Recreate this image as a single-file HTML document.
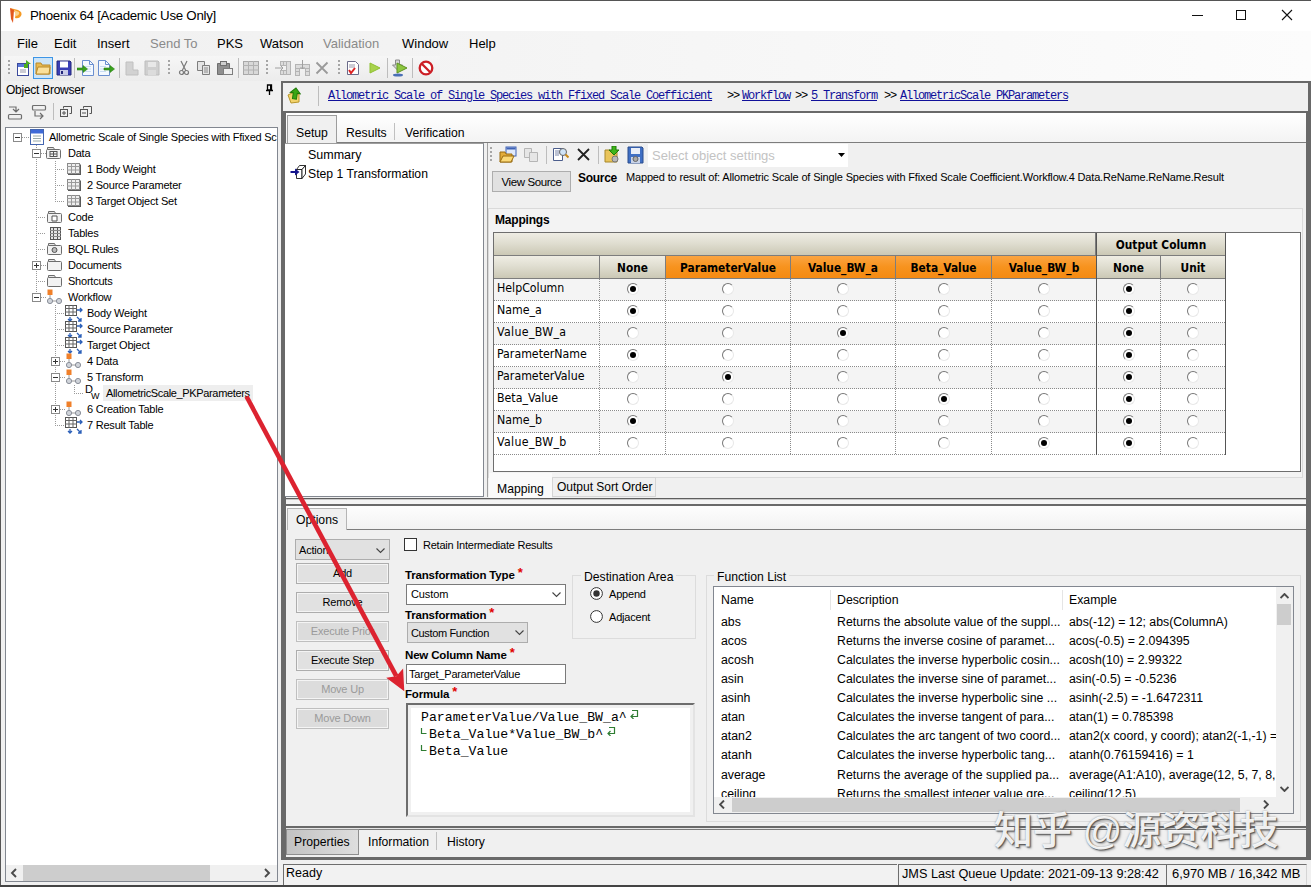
<!DOCTYPE html><html><head><meta charset="utf-8"><title>Phoenix 64 [Academic Use Only]</title><style>
*{box-sizing:border-box}
html,body{margin:0;padding:0}
body{width:1311px;height:887px;position:relative;overflow:hidden;background:#f0f0f0;font-family:"Liberation Sans",sans-serif;font-size:12px;color:#000}
.a{position:absolute}
.t{position:absolute;white-space:nowrap;line-height:1}
.ui{font-family:"Liberation Sans",sans-serif}
.tah{font-family:"DejaVu Sans Condensed","DejaVu Sans","Liberation Sans",sans-serif}
.mono{font-family:"Liberation Mono",monospace}
.gray{color:#8a8a8a}
.b{font-weight:bold}
.btn{position:absolute;border:1px solid #adadad;background:#e1e1e1;text-align:center;font-size:12px;white-space:nowrap}
.btn.dis{color:#9a9a9a;border-color:#bfbfbf;background:#dcdcdc}
.hdr{position:absolute;background:linear-gradient(#efede4,#e0ded1 45%,#cbc8b5);border-right:1px solid #7d7d7d;border-bottom:1px solid #7d7d7d;text-align:center;font-weight:bold;font-size:12px}
.org{background:linear-gradient(#fba441,#f7931e 50%,#f58a12)}
.radio{position:absolute;width:12px;height:12px;border-radius:50%;background:#fff;border:1.500px solid #777;border-right-color:#e8e8e8;border-bottom-color:#e8e8e8;transform:rotate(0deg)}
.radio.on::after{content:"";position:absolute;left:2px;top:2px;width:6px;height:6px;border-radius:50%;background:#000}
.bc{position:absolute;white-space:nowrap;line-height:1;font-family:"Liberation Mono",monospace;font-size:12px;letter-spacing:-1.2px;color:#10109a;text-decoration:underline}
</style></head><body>
<div class="a" style="left:0px;top:0px;width:1311px;height:31px;background:#fff"></div>
<svg class="a" style="left:8px;top:7px" width="16" height="17" viewBox="0 0 16 17"><path d="M2 1 L10 3 Q15 5 13 9 Q11 12 7 11 L8 6 Z" fill="#f59a23"/><path d="M2 1 L6 3 L5 16 L3 12 Z" fill="#e2571c"/><path d="M6 3 L11 5 Q12 8 8 9 Z" fill="#fbd08a"/></svg>
<span id="title" class="t ui" style="left:30px;top:9px;font-size:13.3px;letter-spacing:-0.28px;">Phoenix 64 [Academic Use Only]</span>
<svg class="a" style="left:1180px;top:0" width="131" height="31" viewBox="0 0 131 31"><g stroke="#111" stroke-width="1" fill="none" shape-rendering="crispEdges"><path d="M11.500 15.500H22.500"/><rect x="56.500" y="10.500" width="9" height="9"/></g><path d="M102 10 L112 20 M112 10 L102 20" stroke="#111" stroke-width="1.100" fill="none"/></svg>
<div class="a" style="left:0px;top:31px;width:1311px;height:50px;background:linear-gradient(90deg,#f0f0f0,#f3f3f3 30%,#fcfcfc)"></div>
<div class="a" style="left:4px;top:56px;width:436px;height:25px;background:linear-gradient(#f6f6f6,#ececec)"></div>
<span id="m0" class="t ui" style="left:17px;top:37px;font-size:13px;">File</span>
<span id="m1" class="t ui" style="left:54px;top:37px;font-size:13px;">Edit</span>
<span id="m2" class="t ui" style="left:97px;top:37px;font-size:13px;">Insert</span>
<span id="m3" class="t ui gray" style="left:150px;top:37px;font-size:13px;">Send To</span>
<span id="m4" class="t ui" style="left:217px;top:37px;font-size:13px;">PKS</span>
<span id="m5" class="t ui" style="left:260px;top:37px;font-size:13px;">Watson</span>
<span id="m6" class="t ui gray" style="left:323px;top:37px;font-size:13px;">Validation</span>
<span id="m7" class="t ui" style="left:402px;top:37px;font-size:13px;">Window</span>
<span id="m8" class="t ui" style="left:469px;top:37px;font-size:13px;">Help</span>
<div class="a" style="left:8px;top:60px;width:2px;height:16px;background:repeating-linear-gradient(#a6a6a6 0 2px,transparent 2px 4px)"></div>
<svg class="a" style="left:16px;top:60px" width="16" height="16" viewBox="0 0 16 16" ><rect x="1.500" y="3.500" width="11" height="12" fill="#fff" stroke="#3b4a9c"/><rect x="2" y="4" width="10" height="3" fill="#5a78d8"/><path d="M4 10h6M4 12h6" stroke="#99a"/><path d="M9 1l5 4h-3v4h-4V5H9z" fill="#4caf1f" transform="translate(1,-1)"/></svg>
<div class="a" style="left:33px;top:57px;width:20px;height:22px;background:#cce4f7;border:1px solid #3d95e6"></div>
<svg class="a" style="left:35px;top:60px" width="16" height="16" viewBox="0 0 16 16" ><path d="M1 3h5l1 2h8v9H1z" fill="#e8b950" stroke="#b98a2a"/><path d="M1 14l2-7h12l-1 7z" fill="#fbe09a" stroke="#b98a2a"/></svg>
<svg class="a" style="left:56px;top:60px" width="16" height="16" viewBox="0 0 16 16" ><path d="M1 1h13l1 1v13H1z" fill="#3a3fb5" stroke="#23267a"/><rect x="4" y="1.500" width="8" height="6" fill="#fff"/><rect x="4" y="10" width="8" height="5" fill="#c9cbe8"/><rect x="5" y="11" width="2" height="3" fill="#23267a"/></svg>
<div class="a" style="left:74px;top:58px;width:1px;height:20px;background:#bdbdbd"></div>
<svg class="a" style="left:77px;top:60px" width="18" height="16" viewBox="0 0 18 16" ><path d="M5.500 0.500h7l4 4v11h-11z" fill="#f4f9ff" stroke="#6a8fd0"/><path d="M12.500 0.500v4h4" fill="none" stroke="#6a8fd0"/><path d="M8 6.500h6M8 9h6M8 11.500h6" stroke="#c9dcf2"/><path d="M0 8h6V5.500l4.500 3.500L6 12.500V10H0z" fill="#3aa21f" stroke="#2a8212" stroke-width="0.600"/></svg>
<svg class="a" style="left:97px;top:60px" width="18" height="16" viewBox="0 0 18 16" ><path d="M1.500 0.500h7l4 4v11h-11z" fill="#f4f9ff" stroke="#6a8fd0"/><path d="M8.500 0.500v4h4" fill="none" stroke="#6a8fd0"/><path d="M3 6.500h6M3 9h6M3 11.500h6" stroke="#c9dcf2"/><path d="M7 8h6V5.500l4.500 3.500L13 12.500V10H7z" fill="#3aa21f" stroke="#2a8212" stroke-width="0.600"/></svg>
<div class="a" style="left:119px;top:58px;width:1px;height:20px;background:#bdbdbd"></div>
<svg class="a" style="left:124px;top:60px" width="16" height="16" viewBox="0 0 16 16" ><path d="M2 2h7v8h5v5H2z" fill="#d2d2d2" stroke="#c0c0c0"/></svg>
<svg class="a" style="left:144px;top:60px" width="16" height="16" viewBox="0 0 16 16" ><path d="M1 1h13l1 1v13H1z" fill="#cfcfcf" stroke="#bdbdbd"/><rect x="4" y="2" width="8" height="5" fill="#e8e8e8"/><rect x="4" y="10" width="8" height="5" fill="#dcdcdc"/></svg>
<div class="a" style="left:168px;top:60px;width:2px;height:16px;background:repeating-linear-gradient(#a6a6a6 0 2px,transparent 2px 4px)"></div>
<svg class="a" style="left:178px;top:60px" width="12" height="16" viewBox="0 0 12 16" ><g stroke="#7a7a7a" fill="none" stroke-width="1.200"><path d="M3 1l5 10M9 1L4 11"/><circle cx="3.500" cy="12.500" r="2"/><circle cx="8.500" cy="12.500" r="2"/></g></svg>
<svg class="a" style="left:196px;top:60px" width="16" height="16" viewBox="0 0 16 16" ><g fill="#e4e4e4" stroke="#7d7d7d"><path d="M1.500 1.500h7v9h-7z"/><path d="M6.500 5.500h7v9h-7z"/></g><path d="M8 8h4M8 10h4M8 12h4" stroke="#8a8a8a"/></svg>
<svg class="a" style="left:216px;top:60px" width="18" height="16" viewBox="0 0 18 16" ><path d="M1.500 3.500h12v11h-12z" fill="#8f8f8f" stroke="#6f6f6f"/><rect x="4.500" y="1.500" width="6" height="4" fill="#cfcfcf" stroke="#6f6f6f"/><rect x="7.500" y="8.500" width="9" height="6" fill="#efefef" stroke="#7d7d7d"/></svg>
<div class="a" style="left:238px;top:58px;width:1px;height:20px;background:#bdbdbd"></div>
<svg class="a" style="left:243px;top:61px" width="16" height="14" viewBox="0 0 16 14" ><rect x="0.500" y="0.500" width="15" height="13" fill="#d9d9d9" stroke="#a8a8a8"/><path d="M0 4.500h16M0 9h16M5.500 0v14M10.500 0v14" stroke="#b2b2b2"/></svg>
<div class="a" style="left:266px;top:60px;width:2px;height:16px;background:repeating-linear-gradient(#a6a6a6 0 2px,transparent 2px 4px)"></div>
<svg class="a" style="left:275px;top:61px" width="16" height="14" viewBox="0 0 16 14" ><g fill="#dcdcdc" stroke="#b4b4b4"><rect x="5.500" y="0.500" width="10" height="4"/><rect x="5.500" y="9.500" width="10" height="4"/><rect x="11.500" y="0.500" width="4" height="13"/></g><path d="M8.500 0v4M8.500 10v4" stroke="#b4b4b4"/><path d="M0 7h8M6 5l2 2-2 2" stroke="#a0a0a0" fill="none"/></svg>
<svg class="a" style="left:295px;top:60px" width="16" height="16" viewBox="0 0 16 16" ><g fill="#dcdcdc" stroke="#b4b4b4"><rect x="0.500" y="4.500" width="4" height="11"/><rect x="10.500" y="4.500" width="4" height="11"/><rect x="0.500" y="4.500" width="14" height="4"/></g><path d="M0 11.500h4M11 11.500h4" stroke="#b4b4b4"/><path d="M7.500 0v9M5.500 7l2 2 2-2" stroke="#a0a0a0" fill="none"/></svg>
<svg class="a" style="left:315px;top:61px" width="14" height="14" viewBox="0 0 14 14" ><path d="M1.500 1.500l11 11M12.500 1.500l-11 11" stroke="#9a9a9a" stroke-width="1.800" fill="none"/></svg>
<div class="a" style="left:338px;top:60px;width:2px;height:16px;background:repeating-linear-gradient(#a6a6a6 0 2px,transparent 2px 4px)"></div>
<svg class="a" style="left:345px;top:60px" width="16" height="16" viewBox="0 0 16 16" ><path d="M2.500 1.500h8l3 3v10h-11z" fill="#fff" stroke="#6b6b8a"/><path d="M4 5h6M4 7h6" stroke="#99a"/><path d="M4 10l2 3 4-5" stroke="#d22" stroke-width="2" fill="none"/></svg>
<svg class="a" style="left:369px;top:62px" width="12" height="12" viewBox="0 0 12 12" ><path d="M1 1l10 5L1 11z" fill="#a8d24c" stroke="#8fc033"/></svg>
<div class="a" style="left:387px;top:58px;width:1px;height:20px;background:#bdbdbd"></div>
<svg class="a" style="left:392px;top:59px" width="16" height="18" viewBox="0 0 16 18" ><path d="M4 1h4v5h3l-5 5-5-5h3z" fill="#d6d6d6" stroke="#8a8a8a" transform="translate(-0.500,0)"/><path d="M5 4l10 5-10 5z" fill="#8dc63f" stroke="#5e9422"/><ellipse cx="6" cy="16" rx="5" ry="1.500" fill="#4a6fb5"/></svg>
<div class="a" style="left:412px;top:58px;width:1px;height:20px;background:#bdbdbd"></div>
<svg class="a" style="left:418px;top:60px" width="16" height="16" viewBox="0 0 16 16" ><circle cx="8" cy="8" r="6.300" fill="#fff" stroke="#cc1f26" stroke-width="2.300"/><path d="M3.500 3.500l9 9" stroke="#cc1f26" stroke-width="2.300"/></svg>
<span id="ob" class="t ui" style="left:6px;top:84px;font-size:12px;letter-spacing:-0.26px;">Object Browser</span>
<svg class="a" style="left:265px;top:84px" width="9" height="12" viewBox="0 0 9 12" ><path d="M2.500 1h4v5h-4zM1 6.500h7M4.500 7v4" stroke="#000" fill="none" stroke-width="1.300"/><rect x="5" y="1" width="1.500" height="5" fill="#000"/></svg>
<svg class="a" style="left:7px;top:104px" width="17" height="16" viewBox="0 0 17 16" ><g stroke="#6e6e6e" fill="none" stroke-width="1.200"><path d="M2 3h7v4M6 5l3 3 3-3" /><rect x="1.500" y="10.500" width="13" height="4.500" rx="1"/></g></svg>
<svg class="a" style="left:31px;top:104px" width="17" height="16" viewBox="0 0 17 16" ><g stroke="#6e6e6e" fill="none" stroke-width="1.200"><rect x="1.500" y="1.500" width="13" height="4.500" rx="1"/><path d="M4 7v5h8M9 9l3 3-3 3"/></g></svg>
<div class="a" style="left:53px;top:103px;width:1px;height:17px;background:#bdbdbd"></div>
<svg class="a" style="left:60px;top:106px" width="12" height="11" viewBox="0 0 12 11" ><g stroke="#555" fill="none"><path d="M3.500 2.500v-2h8v7h-2"/><rect x="0.500" y="3.500" width="7" height="7" fill="#f0f0f0"/><path d="M2 7h4M4 5v4"/></g></svg>
<svg class="a" style="left:80px;top:106px" width="12" height="11" viewBox="0 0 12 11" ><g stroke="#555" fill="none"><path d="M3.500 2.500v-2h8v7h-2"/><rect x="0.500" y="3.500" width="7" height="7" fill="#f0f0f0"/><path d="M2 7h4"/></g></svg>
<div class="a" style="left:5px;top:127px;width:273px;height:755px;background:#fff;border:1px solid #828790"></div>
<div class="a" style="left:22px;top:137px;width:8px;height:1px;background:repeating-linear-gradient(90deg,#9a9a9a 0 1px,transparent 1px 2px)"></div>
<div class="a" style="left:36px;top:145px;width:1px;height:152px;background:repeating-linear-gradient(#9a9a9a 0 1px,transparent 1px 2px)"></div>
<div class="a" style="left:41px;top:153px;width:5px;height:1px;background:repeating-linear-gradient(90deg,#9a9a9a 0 1px,transparent 1px 2px)"></div>
<div class="a" style="left:36px;top:217px;width:10px;height:1px;background:repeating-linear-gradient(90deg,#9a9a9a 0 1px,transparent 1px 2px)"></div>
<div class="a" style="left:36px;top:233px;width:10px;height:1px;background:repeating-linear-gradient(90deg,#9a9a9a 0 1px,transparent 1px 2px)"></div>
<div class="a" style="left:36px;top:249px;width:10px;height:1px;background:repeating-linear-gradient(90deg,#9a9a9a 0 1px,transparent 1px 2px)"></div>
<div class="a" style="left:41px;top:265px;width:5px;height:1px;background:repeating-linear-gradient(90deg,#9a9a9a 0 1px,transparent 1px 2px)"></div>
<div class="a" style="left:36px;top:281px;width:10px;height:1px;background:repeating-linear-gradient(90deg,#9a9a9a 0 1px,transparent 1px 2px)"></div>
<div class="a" style="left:41px;top:297px;width:5px;height:1px;background:repeating-linear-gradient(90deg,#9a9a9a 0 1px,transparent 1px 2px)"></div>
<div class="a" style="left:55px;top:161px;width:1px;height:40px;background:repeating-linear-gradient(#9a9a9a 0 1px,transparent 1px 2px)"></div>
<div class="a" style="left:55px;top:169px;width:10px;height:1px;background:repeating-linear-gradient(90deg,#9a9a9a 0 1px,transparent 1px 2px)"></div>
<div class="a" style="left:55px;top:185px;width:10px;height:1px;background:repeating-linear-gradient(90deg,#9a9a9a 0 1px,transparent 1px 2px)"></div>
<div class="a" style="left:55px;top:201px;width:10px;height:1px;background:repeating-linear-gradient(90deg,#9a9a9a 0 1px,transparent 1px 2px)"></div>
<div class="a" style="left:55px;top:305px;width:1px;height:120px;background:repeating-linear-gradient(#9a9a9a 0 1px,transparent 1px 2px)"></div>
<div class="a" style="left:55px;top:313px;width:10px;height:1px;background:repeating-linear-gradient(90deg,#9a9a9a 0 1px,transparent 1px 2px)"></div>
<div class="a" style="left:55px;top:329px;width:10px;height:1px;background:repeating-linear-gradient(90deg,#9a9a9a 0 1px,transparent 1px 2px)"></div>
<div class="a" style="left:55px;top:345px;width:10px;height:1px;background:repeating-linear-gradient(90deg,#9a9a9a 0 1px,transparent 1px 2px)"></div>
<div class="a" style="left:55px;top:425px;width:10px;height:1px;background:repeating-linear-gradient(90deg,#9a9a9a 0 1px,transparent 1px 2px)"></div>
<div class="a" style="left:60px;top:361px;width:5px;height:1px;background:repeating-linear-gradient(90deg,#9a9a9a 0 1px,transparent 1px 2px)"></div>
<div class="a" style="left:60px;top:377px;width:5px;height:1px;background:repeating-linear-gradient(90deg,#9a9a9a 0 1px,transparent 1px 2px)"></div>
<div class="a" style="left:60px;top:409px;width:5px;height:1px;background:repeating-linear-gradient(90deg,#9a9a9a 0 1px,transparent 1px 2px)"></div>
<div class="a" style="left:74px;top:385px;width:1px;height:8px;background:repeating-linear-gradient(#9a9a9a 0 1px,transparent 1px 2px)"></div>
<div class="a" style="left:74px;top:393px;width:10px;height:1px;background:repeating-linear-gradient(90deg,#9a9a9a 0 1px,transparent 1px 2px)"></div>
<svg class="a" style="left:13px;top:133px" width="9" height="9" viewBox="0 0 9 9" shape-rendering="crispEdges"><rect x="0.500" y="0.500" width="8" height="8" fill="#fff" stroke="#8a8a8a"/><path d="M2 4.500h5" stroke="#333" fill="none"/></svg>
<svg class="a" style="left:30px;top:129px" width="15" height="16" viewBox="0 0 15 16" ><rect x="0.500" y="0.500" width="13" height="15" fill="#fff" stroke="#4466b0"/><rect x="1" y="1" width="12" height="3.500" fill="#3f6ad8"/><path d="M3 7h8M3 9.500h8M3 12h8" stroke="#9aa"/></svg>
<span id="t0" class="t " style="left:49px;top:132px;font-size:11px;letter-spacing:-0.22px;">Allometric Scale of Single Species with Ffixed Sc</span>
<svg class="a" style="left:32px;top:149px" width="9" height="9" viewBox="0 0 9 9" shape-rendering="crispEdges"><rect x="0.500" y="0.500" width="8" height="8" fill="#fff" stroke="#8a8a8a"/><path d="M2 4.500h5" stroke="#333" fill="none"/></svg>
<svg class="a" style="left:46px;top:146px" width="16" height="14" viewBox="0 0 16 14" ><path d="M1.500 3.500v-2h6l1 2" fill="#e6e6e6" stroke="#6d6d6d"/><rect x="0.500" y="3.500" width="14" height="9" rx="1" fill="#f2f2f2" stroke="#6d6d6d"/><rect x="4" y="5.500" width="7" height="5" fill="none" stroke="#555"/><path d="M4 8h7M7.500 5.500v5" stroke="#555"/></svg>
<span class="t " style="left:68px;top:148px;font-size:11px;letter-spacing:-0.22px;">Data</span>
<svg class="a" style="left:67px;top:163px" width="15" height="13" viewBox="0 0 15 13" ><rect x="0.500" y="0.500" width="12" height="10" fill="#efefef" stroke="#8a8a8a"/><path d="M0 3.500h13M0 7h13M4.500 0v11M8.500 0v11" stroke="#9a9a9a"/><path d="M1 11.500h13M13.500 1.500v10" stroke="#5a5a5a"/></svg>
<span id="t2" class="t " style="left:87px;top:164px;font-size:11px;letter-spacing:-0.22px;">1 Body Weight</span>
<svg class="a" style="left:67px;top:179px" width="15" height="13" viewBox="0 0 15 13" ><rect x="0.500" y="0.500" width="12" height="10" fill="#efefef" stroke="#8a8a8a"/><path d="M0 3.500h13M0 7h13M4.500 0v11M8.500 0v11" stroke="#9a9a9a"/><path d="M1 11.500h13M13.500 1.500v10" stroke="#5a5a5a"/></svg>
<span id="t3" class="t " style="left:87px;top:180px;font-size:11px;letter-spacing:-0.22px;">2 Source Parameter</span>
<svg class="a" style="left:67px;top:195px" width="15" height="13" viewBox="0 0 15 13" ><rect x="0.500" y="0.500" width="12" height="10" fill="#efefef" stroke="#8a8a8a"/><path d="M0 3.500h13M0 7h13M4.500 0v11M8.500 0v11" stroke="#9a9a9a"/><path d="M1 11.500h13M13.500 1.500v10" stroke="#5a5a5a"/></svg>
<span id="t4" class="t " style="left:87px;top:196px;font-size:11px;letter-spacing:-0.22px;">3 Target Object Set</span>
<svg class="a" style="left:47px;top:210px" width="16" height="14" viewBox="0 0 16 14" ><path d="M1.500 3.500v-2h6l1 2" fill="#e6e6e6" stroke="#6d6d6d"/><rect x="0.500" y="3.500" width="14" height="9" rx="1" fill="#f2f2f2" stroke="#6d6d6d"/><path d="M5 6h5v5H5z" fill="#fff" stroke="#555"/></svg>
<span class="t " style="left:68px;top:212px;font-size:11px;letter-spacing:-0.22px;">Code</span>
<svg class="a" style="left:50px;top:227px" width="11" height="13" viewBox="0 0 11 13" ><rect x="0.500" y="0.500" width="10" height="12" fill="#e4e4e4" stroke="#555"/><path d="M3.500 0v13M7.500 0v13" stroke="#555"/><path d="M0 3.500h11M0 6.500h11M0 9.500h11" stroke="#888"/></svg>
<span class="t " style="left:68px;top:228px;font-size:11px;letter-spacing:-0.22px;">Tables</span>
<svg class="a" style="left:47px;top:242px" width="16" height="14" viewBox="0 0 16 14" ><path d="M1.500 3.500v-2h6l1 2" fill="#e6e6e6" stroke="#6d6d6d"/><rect x="0.500" y="3.500" width="14" height="9" rx="1" fill="#f2f2f2" stroke="#6d6d6d"/><circle cx="7.500" cy="8" r="2.500" fill="#bbb" stroke="#555"/></svg>
<span class="t " style="left:68px;top:244px;font-size:11px;letter-spacing:-0.22px;">BQL Rules</span>
<svg class="a" style="left:32px;top:261px" width="9" height="9" viewBox="0 0 9 9" shape-rendering="crispEdges"><rect x="0.500" y="0.500" width="8" height="8" fill="#fff" stroke="#8a8a8a"/><path d="M2 4.500h5 M4.500 2v5" stroke="#333" fill="none"/></svg>
<svg class="a" style="left:47px;top:258px" width="16" height="14" viewBox="0 0 16 14" ><path d="M1.500 3.500v-2h6l1 2" fill="#e6e6e6" stroke="#6d6d6d"/><rect x="0.500" y="3.500" width="14" height="9" rx="1" fill="#f2f2f2" stroke="#6d6d6d"/></svg>
<span class="t " style="left:68px;top:260px;font-size:11px;letter-spacing:-0.22px;">Documents</span>
<svg class="a" style="left:47px;top:274px" width="16" height="14" viewBox="0 0 16 14" ><path d="M1.500 3.500v-2h6l1 2" fill="#e6e6e6" stroke="#6d6d6d"/><rect x="0.500" y="3.500" width="14" height="9" rx="1" fill="#f2f2f2" stroke="#6d6d6d"/></svg>
<span class="t " style="left:68px;top:276px;font-size:11px;letter-spacing:-0.22px;">Shortcuts</span>
<svg class="a" style="left:32px;top:293px" width="9" height="9" viewBox="0 0 9 9" shape-rendering="crispEdges"><rect x="0.500" y="0.500" width="8" height="8" fill="#fff" stroke="#8a8a8a"/><path d="M2 4.500h5" stroke="#333" fill="none"/></svg>
<svg class="a" style="left:46px;top:289px" width="17" height="16" viewBox="0 0 17 16" ><path d="M4 5v7h9" stroke="#9a9a9a" fill="none"/><rect x="1.500" y="0.500" width="5" height="5.500" fill="#f0802a"/><circle cx="4" cy="12" r="2.600" fill="#d0d4da" stroke="#8a8f99"/><circle cx="13" cy="12" r="2.600" fill="#d0d4da" stroke="#8a8f99"/></svg>
<span class="t " style="left:68px;top:292px;font-size:11px;letter-spacing:-0.22px;">Workflow</span>
<svg class="a" style="left:65px;top:305px" width="18" height="17" viewBox="0 0 18 17" ><rect x="0.500" y="0.500" width="11" height="10" fill="#fff" stroke="#555"/><path d="M0 3.500h12M0 7h12M4 0v11M8 0v11" stroke="#666"/><path d="M12 5h5M15 3l2 2-2 2" stroke="#2b5fb8" fill="none" stroke-width="1.300"/><path d="M5 12v4M3 14l2 2 2-2" stroke="#2b5fb8" fill="none" stroke-width="1.300"/><path d="M12 12l4 4M16 13v3h-3" stroke="#2b5fb8" fill="none" stroke-width="1.300"/></svg>
<span class="t " style="left:87px;top:308px;font-size:11px;letter-spacing:-0.22px;">Body Weight</span>
<svg class="a" style="left:65px;top:321px" width="18" height="17" viewBox="0 0 18 17" ><rect x="0.500" y="0.500" width="11" height="10" fill="#fff" stroke="#555"/><path d="M0 3.500h12M0 7h12M4 0v11M8 0v11" stroke="#666"/><path d="M12 5h5M15 3l2 2-2 2" stroke="#2b5fb8" fill="none" stroke-width="1.300"/><path d="M5 12v4M3 14l2 2 2-2" stroke="#2b5fb8" fill="none" stroke-width="1.300"/><path d="M12 12l4 4M16 13v3h-3" stroke="#2b5fb8" fill="none" stroke-width="1.300"/></svg>
<span class="t " style="left:87px;top:324px;font-size:11px;letter-spacing:-0.22px;">Source Parameter</span>
<svg class="a" style="left:65px;top:337px" width="18" height="17" viewBox="0 0 18 17" ><rect x="0.500" y="0.500" width="11" height="10" fill="#fff" stroke="#555"/><path d="M0 3.500h12M0 7h12M4 0v11M8 0v11" stroke="#666"/><path d="M12 5h5M15 3l2 2-2 2" stroke="#2b5fb8" fill="none" stroke-width="1.300"/><path d="M5 12v4M3 14l2 2 2-2" stroke="#2b5fb8" fill="none" stroke-width="1.300"/><path d="M12 12l4 4M16 13v3h-3" stroke="#2b5fb8" fill="none" stroke-width="1.300"/></svg>
<span class="t " style="left:87px;top:340px;font-size:11px;letter-spacing:-0.22px;">Target Object</span>
<svg class="a" style="left:51px;top:357px" width="9" height="9" viewBox="0 0 9 9" shape-rendering="crispEdges"><rect x="0.500" y="0.500" width="8" height="8" fill="#fff" stroke="#8a8a8a"/><path d="M2 4.500h5 M4.500 2v5" stroke="#333" fill="none"/></svg>
<svg class="a" style="left:65px;top:353px" width="17" height="16" viewBox="0 0 17 16" ><path d="M4 5v7h9" stroke="#9a9a9a" fill="none"/><rect x="1.500" y="0.500" width="5" height="5.500" fill="#f0802a"/><circle cx="4" cy="12" r="2.600" fill="#d0d4da" stroke="#8a8f99"/><circle cx="13" cy="12" r="2.600" fill="#d0d4da" stroke="#8a8f99"/></svg>
<span class="t " style="left:87px;top:356px;font-size:11px;letter-spacing:-0.22px;">4 Data</span>
<svg class="a" style="left:51px;top:373px" width="9" height="9" viewBox="0 0 9 9" shape-rendering="crispEdges"><rect x="0.500" y="0.500" width="8" height="8" fill="#fff" stroke="#8a8a8a"/><path d="M2 4.500h5" stroke="#333" fill="none"/></svg>
<svg class="a" style="left:65px;top:369px" width="17" height="16" viewBox="0 0 17 16" ><path d="M4 5v7h9" stroke="#9a9a9a" fill="none"/><rect x="1.500" y="0.500" width="5" height="5.500" fill="#f0802a"/><circle cx="4" cy="12" r="2.600" fill="#d0d4da" stroke="#8a8f99"/><circle cx="13" cy="12" r="2.600" fill="#d0d4da" stroke="#8a8f99"/></svg>
<span class="t " style="left:87px;top:372px;font-size:11px;letter-spacing:-0.22px;">5 Transform</span>
<div class="a" style="left:103px;top:385px;width:150px;height:16px;background:#eeeeee"></div>
<span class="t " style="left:85px;top:384px;font-size:11px;">D</span>
<span class="t " style="left:91px;top:392px;font-size:9px;">W</span>
<span id="t16" class="t " style="left:106px;top:388px;font-size:11px;letter-spacing:-0.35px;">AllometricScale_PKParameters</span>
<svg class="a" style="left:51px;top:405px" width="9" height="9" viewBox="0 0 9 9" shape-rendering="crispEdges"><rect x="0.500" y="0.500" width="8" height="8" fill="#fff" stroke="#8a8a8a"/><path d="M2 4.500h5 M4.500 2v5" stroke="#333" fill="none"/></svg>
<svg class="a" style="left:65px;top:401px" width="17" height="16" viewBox="0 0 17 16" ><path d="M4 5v7h9" stroke="#9a9a9a" fill="none"/><rect x="1.500" y="0.500" width="5" height="5.500" fill="#f0802a"/><circle cx="4" cy="12" r="2.600" fill="#d0d4da" stroke="#8a8f99"/><circle cx="13" cy="12" r="2.600" fill="#d0d4da" stroke="#8a8f99"/></svg>
<span class="t " style="left:87px;top:404px;font-size:11px;letter-spacing:-0.22px;">6 Creation Table</span>
<svg class="a" style="left:65px;top:417px" width="18" height="17" viewBox="0 0 18 17" ><rect x="0.500" y="0.500" width="11" height="10" fill="#fff" stroke="#555"/><path d="M0 3.500h12M0 7h12M4 0v11M8 0v11" stroke="#666"/><path d="M12 5h5M15 3l2 2-2 2" stroke="#2b5fb8" fill="none" stroke-width="1.300"/><path d="M5 12v4M3 14l2 2 2-2" stroke="#2b5fb8" fill="none" stroke-width="1.300"/><path d="M12 12l4 4M16 13v3h-3" stroke="#2b5fb8" fill="none" stroke-width="1.300"/></svg>
<span class="t " style="left:87px;top:420px;font-size:11px;letter-spacing:-0.22px;">7 Result Table</span>
<div class="a" style="left:6px;top:865px;width:271px;height:16px;background:#f0f0f0"></div>
<div class="a" style="left:23px;top:865px;width:187px;height:16px;background:#cdcdcd"></div>
<svg class="a" style="left:10px;top:868px" width="8" height="10" viewBox="0 0 8 10" ><path d="M6 1L2 5l4 4" stroke="#4a4a4a" stroke-width="1.900" fill="none"/></svg>
<svg class="a" style="left:263px;top:868px" width="8" height="10" viewBox="0 0 8 10" ><path d="M2 1l4 4-4 4" stroke="#4a4a4a" stroke-width="1.900" fill="none"/></svg>
<div class="a" style="left:277px;top:127px;width:1px;height:755px;background:#828790"></div>
<div class="a" style="left:278px;top:82px;width:3px;height:805px;background:#f0f0f0"></div>
<div class="a" style="left:281px;top:81px;width:5px;height:780px;background:#696969"></div>
<div class="a" style="left:281px;top:81px;width:1030px;height:2px;background:#696969"></div>
<div class="a" style="left:1308px;top:81px;width:3px;height:32px;background:#696969"></div>
<div class="a" style="left:283px;top:83px;width:1025px;height:28px;background:#f0f0f0"></div>
<div class="a" style="left:284px;top:111px;width:1027px;height:2px;background:#696969"></div>
<svg class="a" style="left:287px;top:87px" width="15" height="17" viewBox="0 0 15 17" ><path d="M1 8l4-2 7 1v8l-8 1z" fill="#f3d36b" stroke="#b8962a"/><path d="M8 1l5 5h-3v6H6V6H3z" fill="#3aa614" stroke="#1f7a08" transform="translate(0,0) rotate(8 8 8)"/></svg>
<div class="a" style="left:318px;top:86px;width:1px;height:20px;background:#bdbdbd"></div>
<span class="bc" style="left:328px;top:90px" id="bc1">Allometric Scale of Single Species with Ffixed Scale Coefficient</span>
<span class="t mono" style="left:727px;top:90px;font-size:12px;letter-spacing:-1.2px">&gt;&gt;</span>
<span class="bc" style="left:742px;top:90px">Workflow</span>
<span class="t mono" style="left:795px;top:90px;font-size:12px;letter-spacing:-1.2px">&gt;&gt;</span>
<span class="bc" style="left:811px;top:90px">5 Transform</span>
<span class="t mono" style="left:884px;top:90px;font-size:12px;letter-spacing:-1.2px">&gt;&gt;</span>
<span class="bc" style="left:900px;top:90px" id="bc4">AllometricScale_PKParameters</span>
<div class="a" style="left:286px;top:113px;width:1020px;height:30px;background:linear-gradient(#ffffff,#f3f3f3)"></div>
<div class="a" style="left:1306px;top:113px;width:5px;height:746px;background:#696969"></div>
<div class="a" style="left:287px;top:115px;width:50px;height:29px;background:#f0f0f0;border:1px solid #9d9d9d;border-bottom:none"></div>
<span id="tab1" class="t " style="left:296px;top:127px;font-size:12.2px;">Setup</span>
<span class="t " style="left:346px;top:127px;font-size:12.2px;">Results</span>
<div class="a" style="left:394px;top:123px;width:1px;height:17px;background:#c0c0c0"></div>
<span id="tab3" class="t " style="left:405px;top:127px;font-size:12.2px;">Verification</span>
<div class="a" style="left:286px;top:143px;width:1020px;height:355px;background:#f0f0f0"></div>
<div class="a" style="left:337px;top:142px;width:969px;height:1px;background:#7d7d7d"></div>
<div class="a" style="left:285px;top:143px;width:199px;height:354px;background:#fff;border:1px solid #828790;border-top-color:#9d9d9d;border-left:none"></div>
<span id="sum" class="t " style="left:308px;top:149px;font-size:12.5px;">Summary</span>
<span id="step" class="t " style="left:308px;top:168px;font-size:12.2px;">Step 1 Transformation</span>
<svg class="a" style="left:290px;top:164px" width="17" height="16" viewBox="0 0 17 16" ><g fill="#fff" stroke="#1a1a1a" stroke-width="0.900" stroke-linejoin="round"><path d="M6.500 5.500h5.500v9h-5.500z"/><path d="M6.500 5.500l3-4h6l-3.500 4z"/><path d="M12 5.500l3.500-4v8.500l-3.500 4.500z"/></g><path d="M0.500 8h6" stroke="#14148c" stroke-width="2" fill="none"/><path d="M5 4.500l4.500 3.500-4.500 3.500z" fill="#14148c"/></svg>
<div class="a" style="left:487px;top:143px;width:1px;height:354px;background:#a0a0a0"></div>
<div class="a" style="left:490px;top:147px;width:2px;height:16px;background:repeating-linear-gradient(#a6a6a6 0 2px,transparent 2px 4px)"></div>
<svg class="a" style="left:499px;top:146px" width="18" height="18" viewBox="0 0 18 18" ><rect x="7" y="1" width="10" height="9" fill="#dfe9fb" stroke="#3f62b5"/><rect x="7.500" y="1.500" width="9" height="2" fill="#3f62b5"/><path d="M1 6h5l1 2h6v8H1z" fill="#e3ac3a" stroke="#9a6d12"/><path d="M1 16l3-6h11l-3 6z" fill="#fbd977" stroke="#9a6d12"/></svg>
<svg class="a" style="left:523px;top:147px" width="16" height="16" viewBox="0 0 16 16" ><g fill="#e6e6e6" stroke="#b5b5b5"><path d="M1.500 1.500h7v9h-7z"/><path d="M6.500 5.500h8v9h-8z"/></g></svg>
<div class="a" style="left:546px;top:146px;width:1px;height:18px;background:#bdbdbd"></div>
<svg class="a" style="left:552px;top:146px" width="17" height="17" viewBox="0 0 17 17" ><path d="M1.500 2.500h9v12h-9z" fill="#fff" stroke="#4b5d8c"/><path d="M3 5h6M3 7h6M3 9h4" stroke="#7a86a8"/><circle cx="11" cy="6" r="3.500" fill="#cfe3f7" stroke="#666"/><path d="M13.500 8.500l3 3" stroke="#c98a1a" stroke-width="2"/></svg>
<svg class="a" style="left:577px;top:148px" width="13" height="13" viewBox="0 0 13 13" ><path d="M1 1l11 11M12 1L1 12" stroke="#222" stroke-width="1.800"/></svg>
<div class="a" style="left:598px;top:146px;width:1px;height:18px;background:#bdbdbd"></div>
<svg class="a" style="left:604px;top:146px" width="17" height="18" viewBox="0 0 17 18" ><path d="M1 4h5l1 2h6v10H1z" fill="#e9c45a" stroke="#a8882a"/><path d="M8 0h4v4h3l-5 5-5-5h3z" fill="#3eb41a" stroke="#1f7a08"/><circle cx="11" cy="13" r="3" fill="#b9b9b9" stroke="#777"/></svg>
<svg class="a" style="left:627px;top:146px" width="17" height="18" viewBox="0 0 17 18" ><path d="M1 1h14l1 1v15H1z" fill="#3f6fc4" stroke="#2a4c8c"/><rect x="4" y="2" width="9" height="6" fill="#e9eef8"/><rect x="4" y="11" width="9" height="6" fill="#c9d3e8"/><circle cx="8.500" cy="13" r="2.500" fill="#aaa" stroke="#666"/></svg>
<div class="a" style="left:648px;top:144px;width:200px;height:23px;background:#fff"></div>
<span id="sel" class="t ui" style="left:652px;top:149px;font-size:13px;color:#c3c3c3">Select object settings</span>
<svg class="a" style="left:838px;top:153px" width="7" height="4" viewBox="0 0 7 4" ><path d="M0 0h7L3.500 4z" fill="#000"/></svg>
<div class="btn" style="left:492px;top:171px;width:79px;height:21px;line-height:20px;font-size:11.500px;letter-spacing:-0.400px" id="vs">View Source</div>
<span id="src" class="t b" style="left:578px;top:172px;font-size:12px;letter-spacing:-0.3px">Source</span>
<span id="mapped" class="t " style="left:626px;top:172px;font-size:11px;letter-spacing:-0.163px;">Mapped to result of: Allometric Scale of Single Species with Ffixed Scale Coefficient.Workflow.4 Data.ReName.ReName.Result</span>
<div class="a" style="left:488px;top:208px;width:815px;height:270px;background:#f3f3f3;border:1px solid #dadada"></div>
<span id="mp" class="t b" style="left:495px;top:214px;font-size:12px;letter-spacing:-0.2px">Mappings</span>
<div class="a" style="left:493px;top:232px;width:808px;height:240px;background:#fff;border:1px solid #6e6e6e"></div>
<div class="hdr tah" style="left:494px;top:233px;width:602px;height:23px"></div>
<div class="hdr tah" style="left:1097px;top:233px;width:129px;height:23px;line-height:24px;font-size:11.800px">Output Column</div>
<div class="hdr tah" style="left:494px;top:256px;width:106px;height:23px;line-height:24px;font-size:11.800px"></div>
<div class="hdr tah" style="left:600px;top:256px;width:66px;height:23px;line-height:24px;font-size:11.800px">None</div>
<div class="hdr tah org" style="left:666px;top:256px;width:125px;height:23px;line-height:24px;font-size:11.800px">ParameterValue</div>
<div class="hdr tah org" style="left:791px;top:256px;width:105px;height:23px;line-height:24px;font-size:11.800px">Value_BW_a</div>
<div class="hdr tah org" style="left:896px;top:256px;width:96px;height:23px;line-height:24px;font-size:11.800px">Beta_Value</div>
<div class="hdr tah org" style="left:992px;top:256px;width:105px;height:23px;line-height:24px;font-size:11.800px">Value_BW_b</div>
<div class="hdr tah" style="left:1097px;top:256px;width:64px;height:23px;line-height:24px;font-size:11.800px">None</div>
<div class="hdr tah" style="left:1161px;top:256px;width:65px;height:23px;line-height:24px;font-size:11.800px">Unit</div>
<div class="a" style="left:494px;top:279px;width:732px;height:22px;background:#f4f4f4"></div>
<span class="t tah" style="left:497px;top:282px;font-size:12.25px" id="g0">HelpColumn</span>
<div class="a" style="left:494px;top:300px;width:732px;height:1px;background:repeating-linear-gradient(90deg,#8a8a8a 0 1px,transparent 1px 2px)"></div>
<div class="radio on" style="left:627px;top:283px"></div>
<div class="radio" style="left:722px;top:283px"></div>
<div class="radio" style="left:837px;top:283px"></div>
<div class="radio" style="left:938px;top:283px"></div>
<div class="radio" style="left:1038px;top:283px"></div>
<div class="radio on" style="left:1123px;top:283px"></div>
<div class="radio" style="left:1187px;top:283px"></div>
<div class="a" style="left:494px;top:301px;width:732px;height:22px;background:#fff"></div>
<span class="t tah" style="left:497px;top:304px;font-size:12.25px" id="g1">Name_a</span>
<div class="a" style="left:494px;top:322px;width:732px;height:1px;background:repeating-linear-gradient(90deg,#8a8a8a 0 1px,transparent 1px 2px)"></div>
<div class="radio on" style="left:627px;top:305px"></div>
<div class="radio" style="left:722px;top:305px"></div>
<div class="radio" style="left:837px;top:305px"></div>
<div class="radio" style="left:938px;top:305px"></div>
<div class="radio" style="left:1038px;top:305px"></div>
<div class="radio on" style="left:1123px;top:305px"></div>
<div class="radio" style="left:1187px;top:305px"></div>
<div class="a" style="left:494px;top:323px;width:732px;height:22px;background:#f4f4f4"></div>
<span class="t tah" style="left:497px;top:326px;font-size:12.25px;letter-spacing:0.35px" id="g2">Value_BW_a</span>
<div class="a" style="left:494px;top:344px;width:732px;height:1px;background:repeating-linear-gradient(90deg,#8a8a8a 0 1px,transparent 1px 2px)"></div>
<div class="radio" style="left:627px;top:327px"></div>
<div class="radio" style="left:722px;top:327px"></div>
<div class="radio on" style="left:837px;top:327px"></div>
<div class="radio" style="left:938px;top:327px"></div>
<div class="radio" style="left:1038px;top:327px"></div>
<div class="radio on" style="left:1123px;top:327px"></div>
<div class="radio" style="left:1187px;top:327px"></div>
<div class="a" style="left:494px;top:345px;width:732px;height:22px;background:#fff"></div>
<span class="t tah" style="left:497px;top:348px;font-size:12.25px" id="g3">ParameterName</span>
<div class="a" style="left:494px;top:366px;width:732px;height:1px;background:repeating-linear-gradient(90deg,#8a8a8a 0 1px,transparent 1px 2px)"></div>
<div class="radio on" style="left:627px;top:349px"></div>
<div class="radio" style="left:722px;top:349px"></div>
<div class="radio" style="left:837px;top:349px"></div>
<div class="radio" style="left:938px;top:349px"></div>
<div class="radio" style="left:1038px;top:349px"></div>
<div class="radio on" style="left:1123px;top:349px"></div>
<div class="radio" style="left:1187px;top:349px"></div>
<div class="a" style="left:494px;top:367px;width:732px;height:22px;background:#f4f4f4"></div>
<span class="t tah" style="left:497px;top:370px;font-size:12.25px" id="g4">ParameterValue</span>
<div class="a" style="left:494px;top:388px;width:732px;height:1px;background:repeating-linear-gradient(90deg,#8a8a8a 0 1px,transparent 1px 2px)"></div>
<div class="radio" style="left:627px;top:371px"></div>
<div class="radio on" style="left:722px;top:371px"></div>
<div class="radio" style="left:837px;top:371px"></div>
<div class="radio" style="left:938px;top:371px"></div>
<div class="radio" style="left:1038px;top:371px"></div>
<div class="radio on" style="left:1123px;top:371px"></div>
<div class="radio" style="left:1187px;top:371px"></div>
<div class="a" style="left:494px;top:389px;width:732px;height:22px;background:#fff"></div>
<span class="t tah" style="left:497px;top:392px;font-size:12.25px" id="g5">Beta_Value</span>
<div class="a" style="left:494px;top:410px;width:732px;height:1px;background:repeating-linear-gradient(90deg,#8a8a8a 0 1px,transparent 1px 2px)"></div>
<div class="radio" style="left:627px;top:393px"></div>
<div class="radio" style="left:722px;top:393px"></div>
<div class="radio" style="left:837px;top:393px"></div>
<div class="radio on" style="left:938px;top:393px"></div>
<div class="radio" style="left:1038px;top:393px"></div>
<div class="radio on" style="left:1123px;top:393px"></div>
<div class="radio" style="left:1187px;top:393px"></div>
<div class="a" style="left:494px;top:411px;width:732px;height:22px;background:#f4f4f4"></div>
<span class="t tah" style="left:497px;top:414px;font-size:12.25px" id="g6">Name_b</span>
<div class="a" style="left:494px;top:432px;width:732px;height:1px;background:repeating-linear-gradient(90deg,#8a8a8a 0 1px,transparent 1px 2px)"></div>
<div class="radio on" style="left:627px;top:415px"></div>
<div class="radio" style="left:722px;top:415px"></div>
<div class="radio" style="left:837px;top:415px"></div>
<div class="radio" style="left:938px;top:415px"></div>
<div class="radio" style="left:1038px;top:415px"></div>
<div class="radio on" style="left:1123px;top:415px"></div>
<div class="radio" style="left:1187px;top:415px"></div>
<div class="a" style="left:494px;top:433px;width:732px;height:22px;background:#fff"></div>
<span class="t tah" style="left:497px;top:436px;font-size:12.25px;letter-spacing:0.35px" id="g7">Value_BW_b</span>
<div class="a" style="left:494px;top:454px;width:732px;height:1px;background:repeating-linear-gradient(90deg,#8a8a8a 0 1px,transparent 1px 2px)"></div>
<div class="radio" style="left:627px;top:437px"></div>
<div class="radio" style="left:722px;top:437px"></div>
<div class="radio" style="left:837px;top:437px"></div>
<div class="radio" style="left:938px;top:437px"></div>
<div class="radio on" style="left:1038px;top:437px"></div>
<div class="radio on" style="left:1123px;top:437px"></div>
<div class="radio" style="left:1187px;top:437px"></div>
<div class="a" style="left:599px;top:279px;width:1px;height:176px;background:repeating-linear-gradient(#8a8a8a 0 1px,transparent 1px 2px)"></div>
<div class="a" style="left:665px;top:279px;width:1px;height:176px;background:repeating-linear-gradient(#8a8a8a 0 1px,transparent 1px 2px)"></div>
<div class="a" style="left:790px;top:279px;width:1px;height:176px;background:repeating-linear-gradient(#8a8a8a 0 1px,transparent 1px 2px)"></div>
<div class="a" style="left:895px;top:279px;width:1px;height:176px;background:repeating-linear-gradient(#8a8a8a 0 1px,transparent 1px 2px)"></div>
<div class="a" style="left:991px;top:279px;width:1px;height:176px;background:repeating-linear-gradient(#8a8a8a 0 1px,transparent 1px 2px)"></div>
<div class="a" style="left:1160px;top:279px;width:1px;height:176px;background:repeating-linear-gradient(#8a8a8a 0 1px,transparent 1px 2px)"></div>
<div class="a" style="left:1096px;top:233px;width:1px;height:222px;background:#555"></div>
<div class="a" style="left:1225px;top:233px;width:1px;height:222px;background:#555"></div>
<div class="a" style="left:489px;top:473px;width:63px;height:25px;background:#fafafa"></div>
<span id="mtab" class="t " style="left:497px;top:483px;font-size:12.2px;">Mapping</span>
<div class="a" style="left:552px;top:477px;width:104px;height:20px;background:#f0f0f0;border:1px solid #d5d5d5"></div>
<span id="otab" class="t " style="left:557px;top:481px;font-size:12px;">Output Sort Order</span>
<div class="a" style="left:286px;top:498px;width:1020px;height:1px;background:#5e5e5e"></div>
<div class="a" style="left:286px;top:499px;width:1020px;height:1px;background:#c8c8c8"></div>
<div class="a" style="left:286px;top:500px;width:1020px;height:4px;background:#f4f4f4"></div>
<div class="a" style="left:286px;top:504px;width:1020px;height:2px;background:#696969"></div>
<div class="a" style="left:286px;top:506px;width:1020px;height:24px;background:linear-gradient(#fdfdfd,#f2f2f2)"></div>
<div class="a" style="left:286px;top:530px;width:1020px;height:296px;background:#f0f0f0"></div>
<div class="a" style="left:346px;top:529px;width:960px;height:1px;background:#7d7d7d"></div>
<div class="a" style="left:287px;top:508px;width:60px;height:22px;background:#f0f0f0;border:1px solid #b5b5b5;border-bottom:none"></div>
<span id="opt" class="t " style="left:296px;top:514px;font-size:12.2px;">Options</span>
<div class="a" style="left:295px;top:539px;width:95px;height:21px;background:#e1e1e1;border:1px solid #adadad"></div>
<span class="t " style="left:299px;top:545px;font-size:11px;letter-spacing:-0.2px;">Action</span>
<svg class="a" style="left:376px;top:548px" width="9" height="6" viewBox="0 0 9 6" ><path d="M0.500 0.500l4 4 4-4" stroke="#444" fill="none" stroke-width="1.100"/></svg>
<div class="btn" style="left:296px;top:563px;width:93px;height:21px;line-height:19px;font-size:11px;letter-spacing:-0.200px;box-shadow:inset 0 0 0 1px #f4f4f4">Add</div>
<div class="btn" style="left:296px;top:592px;width:93px;height:21px;line-height:19px;font-size:11px;letter-spacing:-0.200px;box-shadow:inset 0 0 0 1px #f4f4f4">Remove</div>
<div class="btn dis" style="left:296px;top:621px;width:93px;height:21px;line-height:19px;font-size:11px;letter-spacing:-0.200px;box-shadow:inset 0 0 0 1px #f4f4f4">Execute Prior</div>
<div class="btn" style="left:296px;top:650px;width:93px;height:21px;line-height:19px;font-size:11px;letter-spacing:-0.200px;box-shadow:inset 0 0 0 1px #f4f4f4">Execute Step</div>
<div class="btn dis" style="left:296px;top:679px;width:93px;height:21px;line-height:19px;font-size:11px;letter-spacing:-0.200px;box-shadow:inset 0 0 0 1px #f4f4f4">Move Up</div>
<div class="btn dis" style="left:296px;top:708px;width:93px;height:21px;line-height:19px;font-size:11px;letter-spacing:-0.200px;box-shadow:inset 0 0 0 1px #f4f4f4">Move Down</div>
<div class="a" style="left:404px;top:538px;width:13px;height:13px;background:#fff;border:1px solid #333"></div>
<span id="ret" class="t " style="left:423px;top:540px;font-size:11px;letter-spacing:-0.23px;">Retain Intermediate Results</span>
<span id="tt" class="t b" style="left:405px;top:568px;font-size:11.500px;letter-spacing:-0.17px;">Transformation Type <span style="color:#e00000;font-weight:bold;font-size:13px;position:relative;top:-2px">*</span></span>
<div class="a" style="left:406px;top:584px;width:160px;height:21px;background:#fff;border:1px solid #7a7a7a"></div>
<span class="t " style="left:411px;top:589px;font-size:11px;letter-spacing:-0.1px;">Custom</span>
<svg class="a" style="left:552px;top:592px" width="9" height="6" viewBox="0 0 9 6" ><path d="M0.500 0.500l4 4 4-4" stroke="#444" fill="none" stroke-width="1.100"/></svg>
<span class="t b" style="left:405px;top:608px;font-size:11.500px;letter-spacing:-0.17px;">Transformation <span style="color:#e00000;font-weight:bold;font-size:13px;position:relative;top:-2px">*</span></span>
<div class="a" style="left:407px;top:622px;width:121px;height:21px;background:#e1e1e1;border:1px solid #adadad"></div>
<span class="t " style="left:411px;top:628px;font-size:11px;letter-spacing:-0.35px;">Custom Function</span>
<svg class="a" style="left:515px;top:630px" width="9" height="6" viewBox="0 0 9 6" ><path d="M0.500 0.500l4 4 4-4" stroke="#444" fill="none" stroke-width="1.100"/></svg>
<span id="ncn" class="t b" style="left:405px;top:648px;font-size:11.500px;letter-spacing:-0.17px;">New Column Name <span style="color:#e00000;font-weight:bold;font-size:13px;position:relative;top:-2px">*</span></span>
<div class="a" style="left:406px;top:664px;width:160px;height:20px;background:#fff;border:1px solid #7a7a7a"></div>
<span id="tpv" class="t " style="left:409px;top:669px;font-size:11px;letter-spacing:-0.2px;">Target_ParameterValue</span>
<span class="t b" style="left:405px;top:687px;font-size:11.500px;letter-spacing:-0.17px;">Formula <span style="color:#e00000;font-weight:bold;font-size:13px;position:relative;top:-2px">*</span></span>
<div class="a" style="left:406px;top:703px;width:289px;height:114px;background:#fff;border:2px solid #a0a0a0;border-top-color:#6d6d6d;border-left-color:#6d6d6d;border-right-color:#e3e3e3;border-bottom-color:#e3e3e3;box-shadow:inset 0 0 0 3px #f0f0f0"></div>
<span id="f1" class="t mono" style="left:421px;top:711px;font-size:13.2px;">ParameterValue/Value_BW_a^</span>
<span id="f2" class="t mono" style="left:429px;top:728px;font-size:13.2px;">Beta_Value*Value_BW_b^</span>
<span id="f3" class="t mono" style="left:429px;top:745px;font-size:13.2px;">Beta_Value</span>
<svg class="a" style="left:630px;top:709px" width="9" height="10" viewBox="0 0 9 10" ><path d="M2 1.500h5.500v6h-6M3.500 5l-2.500 2.500 2.500 2.500" stroke="#2e7d32" fill="none" stroke-width="1.200"/></svg>
<svg class="a" style="left:607px;top:726px" width="9" height="10" viewBox="0 0 9 10" ><path d="M2 1.500h5.500v6h-6M3.500 5l-2.500 2.500 2.500 2.500" stroke="#2e7d32" fill="none" stroke-width="1.200"/></svg>
<svg class="a" style="left:420px;top:728px" width="8" height="8" viewBox="0 0 8 8" ><path d="M1.500 0v5.500h5" stroke="#2e7d32" fill="none" stroke-width="1.200"/></svg>
<svg class="a" style="left:420px;top:745px" width="8" height="8" viewBox="0 0 8 8" ><path d="M1.500 0v5.500h5" stroke="#2e7d32" fill="none" stroke-width="1.200"/></svg>
<div class="a" style="left:572px;top:575px;width:124px;height:64px;border:1px solid #dcdcdc"></div>
<span class="t" style="left:581px;top:571px;font-size:12.200px;background:#f0f0f0;padding:0 3px" id="dest">Destination Area</span>
<svg class="a" style="left:590px;top:587px" width="13" height="13" viewBox="0 0 13 13" ><circle cx="6.500" cy="6.500" r="5.900" fill="#fff" stroke="#333"/><circle cx="6.500" cy="6.500" r="3.200" fill="#333"/></svg>
<span class="t " style="left:609px;top:589px;font-size:11px;letter-spacing:-0.2px;">Append</span>
<svg class="a" style="left:590px;top:610px" width="13" height="13" viewBox="0 0 13 13" ><circle cx="6.500" cy="6.500" r="5.900" fill="#fff" stroke="#333"/></svg>
<span class="t " style="left:609px;top:612px;font-size:11px;letter-spacing:-0.2px;">Adjacent</span>
<div class="a" style="left:706px;top:575px;width:595px;height:247px;border:1px solid #dcdcdc"></div>
<span class="t" style="left:714px;top:571px;font-size:12.200px;background:#f0f0f0;padding:0 3px" id="fl">Function List</span>
<div class="a" style="left:713px;top:586px;width:581px;height:228px;background:#fff;border:1px solid #828790"></div>
<span class="t " style="left:721px;top:594px;font-size:12.3px;">Name</span>
<span class="t " style="left:837px;top:594px;font-size:12.3px;">Description</span>
<span class="t " style="left:1069px;top:594px;font-size:12.3px;">Example</span>
<div class="a" style="left:830px;top:590px;width:1px;height:20px;background:#e5e5e5"></div>
<div class="a" style="left:1062px;top:590px;width:1px;height:20px;background:#e5e5e5"></div>
<div class="a" style="left:714px;top:611px;width:562px;height:186px;overflow:hidden">
<span class="t" style="left:7px;top:5px;font-size:12.3px">abs</span><span class="t" style="left:123px;top:5px;font-size:12.3px" id="fd0">Returns the absolute value of the suppl...</span><span class="t" style="left:355px;top:5px;font-size:12.3px" id="fe0">abs(-12) = 12; abs(ColumnA)</span>
<span class="t" style="left:7px;top:24px;font-size:12.3px">acos</span><span class="t" style="left:123px;top:24px;font-size:12.3px" id="fd1">Returns the inverse cosine of paramet...</span><span class="t" style="left:355px;top:24px;font-size:12.3px" id="fe1">acos(-0.5) = 2.094395</span>
<span class="t" style="left:7px;top:43px;font-size:12.3px">acosh</span><span class="t" style="left:123px;top:43px;font-size:12.3px" id="fd2">Calculates the inverse hyperbolic cosin...</span><span class="t" style="left:355px;top:43px;font-size:12.3px" id="fe2">acosh(10) = 2.99322</span>
<span class="t" style="left:7px;top:62px;font-size:12.3px">asin</span><span class="t" style="left:123px;top:62px;font-size:12.3px" id="fd3">Calculates the inverse sine of paramet...</span><span class="t" style="left:355px;top:62px;font-size:12.3px" id="fe3">asin(-0.5) = -0.5236</span>
<span class="t" style="left:7px;top:81px;font-size:12.3px">asinh</span><span class="t" style="left:123px;top:81px;font-size:12.3px" id="fd4">Calculates the inverse hyperbolic sine ...</span><span class="t" style="left:355px;top:81px;font-size:12.3px" id="fe4">asinh(-2.5) = -1.6472311</span>
<span class="t" style="left:7px;top:100px;font-size:12.3px">atan</span><span class="t" style="left:123px;top:100px;font-size:12.3px" id="fd5">Calculates the inverse tangent of para...</span><span class="t" style="left:355px;top:100px;font-size:12.3px" id="fe5">atan(1) = 0.785398</span>
<span class="t" style="left:7px;top:119px;font-size:12.3px">atan2</span><span class="t" style="left:123px;top:119px;font-size:12.3px" id="fd6">Calculates the arc tangent of two coord...</span><span class="t" style="left:355px;top:119px;font-size:12.3px" id="fe6">atan2(x coord, y coord); atan2(-1,-1) =</span>
<span class="t" style="left:7px;top:138px;font-size:12.3px">atanh</span><span class="t" style="left:123px;top:138px;font-size:12.3px" id="fd7">Calculates the inverse hyperbolic tang...</span><span class="t" style="left:355px;top:138px;font-size:12.3px" id="fe7">atanh(0.76159416) = 1</span>
<span class="t" style="left:7px;top:158px;font-size:12.3px">average</span><span class="t" style="left:123px;top:158px;font-size:12.3px" id="fd8">Returns the average of the supplied pa...</span><span class="t" style="left:355px;top:158px;font-size:12.3px" id="fe8">average(A1:A10), average(12, 5, 7, 8, 1</span>
<span class="t" style="left:7px;top:177px;font-size:12.3px">ceiling</span><span class="t" style="left:123px;top:177px;font-size:12.3px" id="fd9">Returns the smallest integer value gre...</span><span class="t" style="left:355px;top:177px;font-size:12.3px" id="fe9">ceiling(12.5)</span>
</div>
<div class="a" style="left:1276px;top:587px;width:17px;height:210px;background:#f0f0f0"></div>
<div class="a" style="left:1277px;top:604px;width:14px;height:21px;background:#cdcdcd"></div>
<svg class="a" style="left:1280px;top:593px" width="9" height="6" viewBox="0 0 9 6" ><path d="M0.500 5l4-4 4 4" stroke="#4a4a4a" stroke-width="1.900" fill="none"/></svg>
<svg class="a" style="left:1280px;top:786px" width="9" height="6" viewBox="0 0 9 6" ><path d="M0.500 1l4 4 4-4" stroke="#4a4a4a" stroke-width="1.900" fill="none"/></svg>
<div class="a" style="left:714px;top:797px;width:579px;height:16px;background:#f0f0f0"></div>
<div class="a" style="left:732px;top:798px;width:508px;height:14px;background:#cdcdcd"></div>
<svg class="a" style="left:719px;top:800px" width="6" height="9" viewBox="0 0 6 9" ><path d="M5 0.500l-4 4 4 4" stroke="#4a4a4a" stroke-width="1.900" fill="none"/></svg>
<svg class="a" style="left:1263px;top:800px" width="6" height="9" viewBox="0 0 6 9" ><path d="M1 0.500l4 4-4 4" stroke="#4a4a4a" stroke-width="1.900" fill="none"/></svg>
<div class="a" style="left:286px;top:826px;width:1020px;height:2px;background:#696969"></div>
<div class="a" style="left:286px;top:828px;width:1020px;height:1px;background:#e6e6e6"></div>
<div class="a" style="left:286px;top:829px;width:1020px;height:1px;background:#7a7a7a"></div>
<div class="a" style="left:286px;top:830px;width:1020px;height:27px;background:#f0f0f0"></div>
<div class="a" style="left:286px;top:829px;width:73px;height:26px;background:linear-gradient(90deg,#c2c2c2,#dedede);border:1px solid #8e8e8e"></div>
<span id="prop" class="t " style="left:294px;top:836px;font-size:12.2px;">Properties</span>
<span class="t " style="left:368px;top:836px;font-size:12.2px;">Information</span>
<div class="a" style="left:436px;top:832px;width:1px;height:18px;background:#c0c0c0"></div>
<span class="t " style="left:447px;top:836px;font-size:12.2px;">History</span>
<div class="a" style="left:281px;top:857px;width:1030px;height:3px;background:#696969"></div>
<div class="a" style="left:278px;top:860px;width:1033px;height:4px;background:#f0f0f0"></div>
<div class="a" style="left:283px;top:864px;width:614px;height:22px;background:#f2f2f2;border:1px solid #a5a5a5;border-top-color:#6e6e6e;border-left-color:#6e6e6e;border-right:none"></div>
<span id="ready" class="t " style="left:286px;top:867px;font-size:12.5px;">Ready</span>
<div class="a" style="left:898px;top:864px;width:268px;height:22px;border-left:1px solid #6e6e6e;border-top:1px solid #6e6e6e"></div>
<span id="jms" class="t " style="left:902px;top:868px;font-size:12.7px;">JMS Last Queue Update: 2021-09-13 9:28:42</span>
<div class="a" style="left:1166px;top:864px;width:141px;height:22px;border-left:1px solid #6e6e6e;border-top:1px solid #6e6e6e;border-right:1px solid #d5d5d5"></div>
<span id="mb" class="t " style="left:1172px;top:868px;font-size:12.9px;">6,970 MB / 16,342 MB</span>
<div class="a" style="left:0px;top:0px;width:1311px;height:1px;background:#555"></div>
<div class="a" style="left:0px;top:0px;width:1px;height:887px;background:#555"></div>
<div class="a" style="left:0px;top:885px;width:1311px;height:2px;background:#444"></div>
<svg class="a" style="left:0;top:0" width="1311" height="887" viewBox="0 0 1311 887"><path d="M246.5 396.5L396.3 676.2" stroke="#dc2330" stroke-width="4.600" fill="none"/><path d="M404.3 691.2L386.2 677.7L396.3 676.2L403.1 668.6Z" fill="#dc2330"/></svg>
<span class="t" style="left:994px;top:811px;font-size:39px;font-family:'Liberation Sans','Noto Sans CJK SC',sans-serif;font-weight:500;color:rgba(255,255,255,0.93);text-shadow:1px 1px 1px rgba(70,70,70,0.8),0 0 2px rgba(110,110,110,0.7),2px 2px 2px rgba(110,110,110,0.5);letter-spacing:0px" id="wm">知乎 @源资科技</span>
</body></html>
